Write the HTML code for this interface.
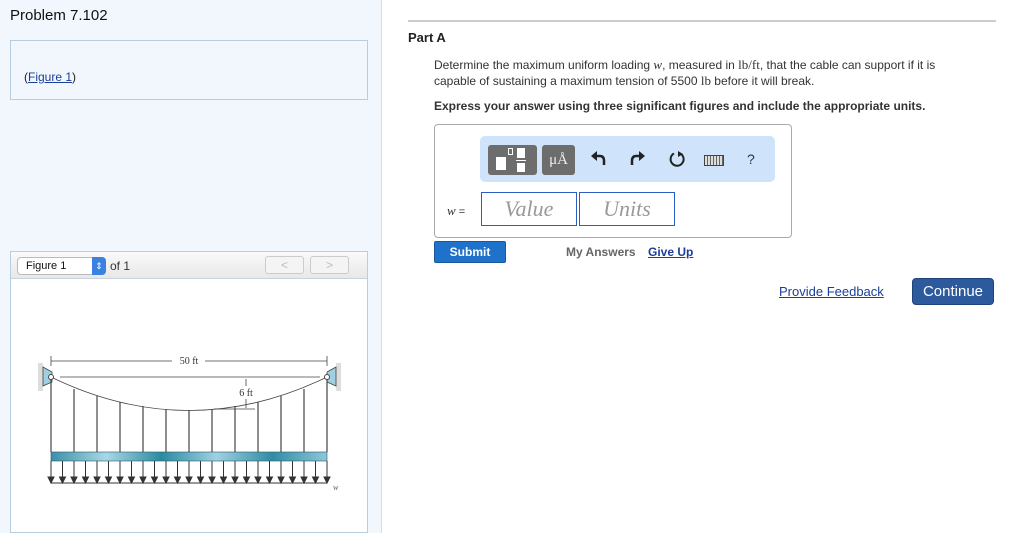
<!DOCTYPE html>
<html><head><meta charset="utf-8"><style>
*{margin:0;padding:0;box-sizing:border-box}
body{width:1013px;height:533px;position:relative;background:#fff;font-family:"Liberation Sans",Arial,sans-serif;overflow:hidden;color:#222}
.abs{position:absolute}
#left{left:0;top:0;width:382px;height:533px;background:#f2f7fd;border-right:1px solid #d5dde8}
a{color:#1a3e9a}
.serif{font-family:"Liberation Serif",serif}
</style></head><body>
<div id="left" class="abs">
  <div class="abs" style="left:10px;top:7px;font-size:15px;color:#111">Problem 7.102</div>
  <div class="abs" style="left:10px;top:40px;width:358px;height:60px;border:1px solid #b8cde0;background:#f2f7fd"></div>
  <div class="abs" style="left:24px;top:70px;font-size:12px;color:#222">(<a style="text-decoration:underline">Figure 1</a>)</div>
  <div class="abs" style="left:10px;top:251px;width:358px;height:282px;border:1px solid #b8cde0;background:#fff"></div>
  <div class="abs" style="left:11px;top:252px;width:356px;height:27px;background:linear-gradient(#fafafa,#e8e8e8);border-bottom:1px solid #c8d3de"></div>
  <div class="abs" style="left:17px;top:257px;width:89px;height:18px;border:1px solid #bbb;border-radius:4px;background:#fff;font-size:11px;padding:2px 0 0 8px;color:#111">Figure 1</div>
  <div class="abs" style="left:92px;top:257px;width:14px;height:18px;background:#3b82e0;border-radius:0 4px 4px 0;color:#fff;font-size:9px;text-align:center;line-height:18px">⇕</div>
  <div class="abs" style="left:110px;top:259px;font-size:12px;color:#333">of 1</div>
  <div class="abs" style="left:265px;top:256px;width:39px;height:18px;border:1px solid #ccc;border-radius:3px;background:#f4f4f4;color:#bbb;font-size:12px;text-align:center;line-height:16px">&lt;</div>
  <div class="abs" style="left:310px;top:256px;width:39px;height:18px;border:1px solid #ccc;border-radius:3px;background:#f4f4f4;color:#bbb;font-size:12px;text-align:center;line-height:16px">&gt;</div>
  <svg class="abs" style="left:0;top:0" width="382" height="533">
    <defs><linearGradient id="bm" x1="0" x2="1">
      <stop offset="0" stop-color="#3a90a8"/><stop offset=".2" stop-color="#a8d8e6"/><stop offset=".4" stop-color="#2a8aa0"/><stop offset=".6" stop-color="#9fd2e2"/><stop offset=".8" stop-color="#2f8ca4"/><stop offset="1" stop-color="#8cc8da"/></linearGradient></defs>
    <rect x="38" y="363" width="5" height="28" fill="#ddd"/>
    <polygon points="43,367 52,372 52,382 43,386" fill="#9fcfe0" stroke="#444" stroke-width="0.8"/>
    <circle cx="51" cy="377" r="2.5" fill="#fff" stroke="#444"/>
    <rect x="336" y="363" width="5" height="28" fill="#ddd"/>
    <polygon points="336,367 327,372 327,382 336,386" fill="#9fcfe0" stroke="#444" stroke-width="0.8"/>
    <circle cx="327" cy="377" r="2.5" fill="#fff" stroke="#444"/>
    <g stroke="#444" stroke-width="0.8" fill="none">
      <line x1="51" y1="361" x2="172" y2="361"/><line x1="205" y1="361" x2="327" y2="361"/>
      <line x1="51" y1="356" x2="51" y2="366"/><line x1="327" y1="356" x2="327" y2="366"/>
      <line x1="60" y1="377" x2="320" y2="377"/>
      <path d="M53,378 Q189,443 325,378"/>
      <line x1="246" y1="379" x2="246" y2="386"/><line x1="246" y1="399" x2="246" y2="408"/>
      <line x1="214" y1="409" x2="255" y2="409"/>
    </g>
    <text x="189" y="364" font-family="Liberation Serif" font-size="10" text-anchor="middle" fill="#333">50 ft</text>
    <text x="246" y="396" font-family="Liberation Serif" font-size="10" text-anchor="middle" fill="#333">6 ft</text>
    <g stroke="#444" stroke-width="1.2">
      <line x1="51" y1="380" x2="51" y2="452"/><line x1="74" y1="389" x2="74" y2="452"/><line x1="97" y1="396" x2="97" y2="452"/><line x1="120" y1="402" x2="120" y2="452"/><line x1="143" y1="406" x2="143" y2="452"/><line x1="166" y1="409" x2="166" y2="452"/><line x1="189" y1="410" x2="189" y2="452"/><line x1="212" y1="409" x2="212" y2="452"/><line x1="235" y1="406" x2="235" y2="452"/><line x1="258" y1="402" x2="258" y2="452"/><line x1="281" y1="396" x2="281" y2="452"/><line x1="304" y1="389" x2="304" y2="452"/><line x1="327" y1="380" x2="327" y2="452"/>
    </g>
    <rect x="51" y="452" width="276" height="9" fill="url(#bm)" stroke="#356" stroke-width="0.6"/>
    <g stroke="#333" stroke-width="1" fill="#333">
      <line x1="51" y1="483" x2="327" y2="483"/>
      <g id="ar"><line x1="51" y1="461" x2="51" y2="479"/><polygon points="48,477 54,477 51,483"/></g>
      <use href="#ar" x="11.5"/><use href="#ar" x="23"/><use href="#ar" x="34.5"/><use href="#ar" x="46"/><use href="#ar" x="57.5"/><use href="#ar" x="69"/><use href="#ar" x="80.5"/><use href="#ar" x="92"/><use href="#ar" x="103.5"/><use href="#ar" x="115"/><use href="#ar" x="126.5"/><use href="#ar" x="138"/><use href="#ar" x="149.5"/><use href="#ar" x="161"/><use href="#ar" x="172.5"/><use href="#ar" x="184"/><use href="#ar" x="195.5"/><use href="#ar" x="207"/><use href="#ar" x="218.5"/><use href="#ar" x="230"/><use href="#ar" x="241.5"/><use href="#ar" x="253"/><use href="#ar" x="264.5"/><use href="#ar" x="276"/>
    </g>
    <text x="333" y="490" font-family="Liberation Serif" font-style="italic" font-size="8" fill="#555">w</text>
  </svg>
</div>

<div class="abs" style="left:408px;top:20px;width:588px;height:2px;background:#ccc"></div>
<div class="abs" style="left:408px;top:30px;font-size:13px;font-weight:bold;color:#222">Part A</div>
<div class="abs" style="left:434px;top:57px;width:548px;font-size:12px;line-height:15px;color:#333">Determine the maximum uniform loading <i class="serif" style="font-size:13px">w</i>, measured in <span class="serif" style="font-size:13px">lb/ft</span>, that the cable can support if it is<br>capable of sustaining a maximum tension of 5500 <span class="serif" style="font-size:13px">lb</span> before it will break.</div>
<div class="abs" style="left:434px;top:99px;font-size:12px;font-weight:bold;color:#333">Express your answer using three significant figures and include the appropriate units.</div>

<div class="abs" style="left:434px;top:124px;width:358px;height:114px;border:1px solid #aaa;border-radius:4px"></div>
<div class="abs" style="left:480px;top:136px;width:295px;height:46px;background:#cfe4fb;border-radius:5px"></div>
<div class="abs" style="left:488px;top:145px;width:49px;height:30px;background:#6d6d6d;border-radius:3px">
  <div class="abs" style="left:8px;top:12px;width:10px;height:13px;background:#fff"></div>
  <div class="abs" style="left:20px;top:3px;width:5px;height:7px;border:1px solid #fff"></div>
  <div class="abs" style="left:29px;top:3px;width:8px;height:10px;background:#fff"></div>
  <div class="abs" style="left:28px;top:15px;width:10px;height:1px;background:#fff"></div>
  <div class="abs" style="left:29px;top:18px;width:8px;height:9px;background:#fff"></div>
</div>
<div class="abs" style="left:542px;top:145px;width:33px;height:30px;background:#6d6d6d;border-radius:3px;color:#eee;font-family:'Liberation Serif',serif;font-size:15px;text-align:center;line-height:30px">μÅ</div>
<svg class="abs" style="left:590px;top:150px" width="18" height="18"><path d="M5,6 H10 Q14,6 14,11 V15" fill="none" stroke="#222" stroke-width="2.5"/><polygon points="1,6 7,1 7,11" fill="#222"/></svg>
<svg class="abs" style="left:628px;top:150px" width="18" height="18"><path d="M13,6 H8 Q4,6 4,11 V15" fill="none" stroke="#222" stroke-width="2.5"/><polygon points="17,6 11,1 11,11" fill="#222"/></svg>
<svg class="abs" style="left:668px;top:150px" width="18" height="18"><path d="M13,4 A6.5,6.5 0 1 1 6,3.5" fill="none" stroke="#222" stroke-width="2"/><polygon points="10,1 15,4 10,7" fill="#222"/></svg>
<div class="abs" style="left:704px;top:155px;width:20px;height:11px;border:1px solid #444;background:repeating-linear-gradient(90deg,#ddd 0 2px,#666 2px 3px)"></div>
<div class="abs" style="left:747px;top:151px;font-size:14px;color:#333">?</div>

<div class="abs" style="left:447px;top:203px;font-size:11px;color:#333"><i class="serif" style="font-size:13px">w</i> =</div>
<div class="abs" style="left:481px;top:192px;width:96px;height:34px;border:1px solid #2c5cc5;font-family:'Liberation Serif',serif;font-style:italic;font-size:22px;color:#999;text-align:center;line-height:32px">Value</div>
<div class="abs" style="left:579px;top:192px;width:96px;height:34px;border:1px solid #2c5cc5;font-family:'Liberation Serif',serif;font-style:italic;font-size:22px;color:#999;text-align:center;line-height:32px">Units</div>

<div class="abs" style="left:434px;top:241px;width:72px;height:22px;background:#1f72c9;border:1px solid #175a9e;border-radius:2px;color:#fff;font-size:12px;font-weight:bold;text-align:center;line-height:20px">Submit</div>
<div class="abs" style="left:566px;top:245px;font-size:12px;font-weight:bold;color:#666">My Answers</div>
<div class="abs" style="left:648px;top:245px;font-size:12px;font-weight:bold;color:#1a3e9a;text-decoration:underline">Give Up</div>

<div class="abs" style="left:779px;top:284px;font-size:13px;color:#1a3e9a;text-decoration:underline">Provide Feedback</div>
<div class="abs" style="left:912px;top:278px;width:82px;height:27px;background:#2d5a9c;border:1px solid #1e447a;border-radius:4px;color:#fff;font-size:15px;text-align:center;line-height:25px">Continue</div>
</body></html>
